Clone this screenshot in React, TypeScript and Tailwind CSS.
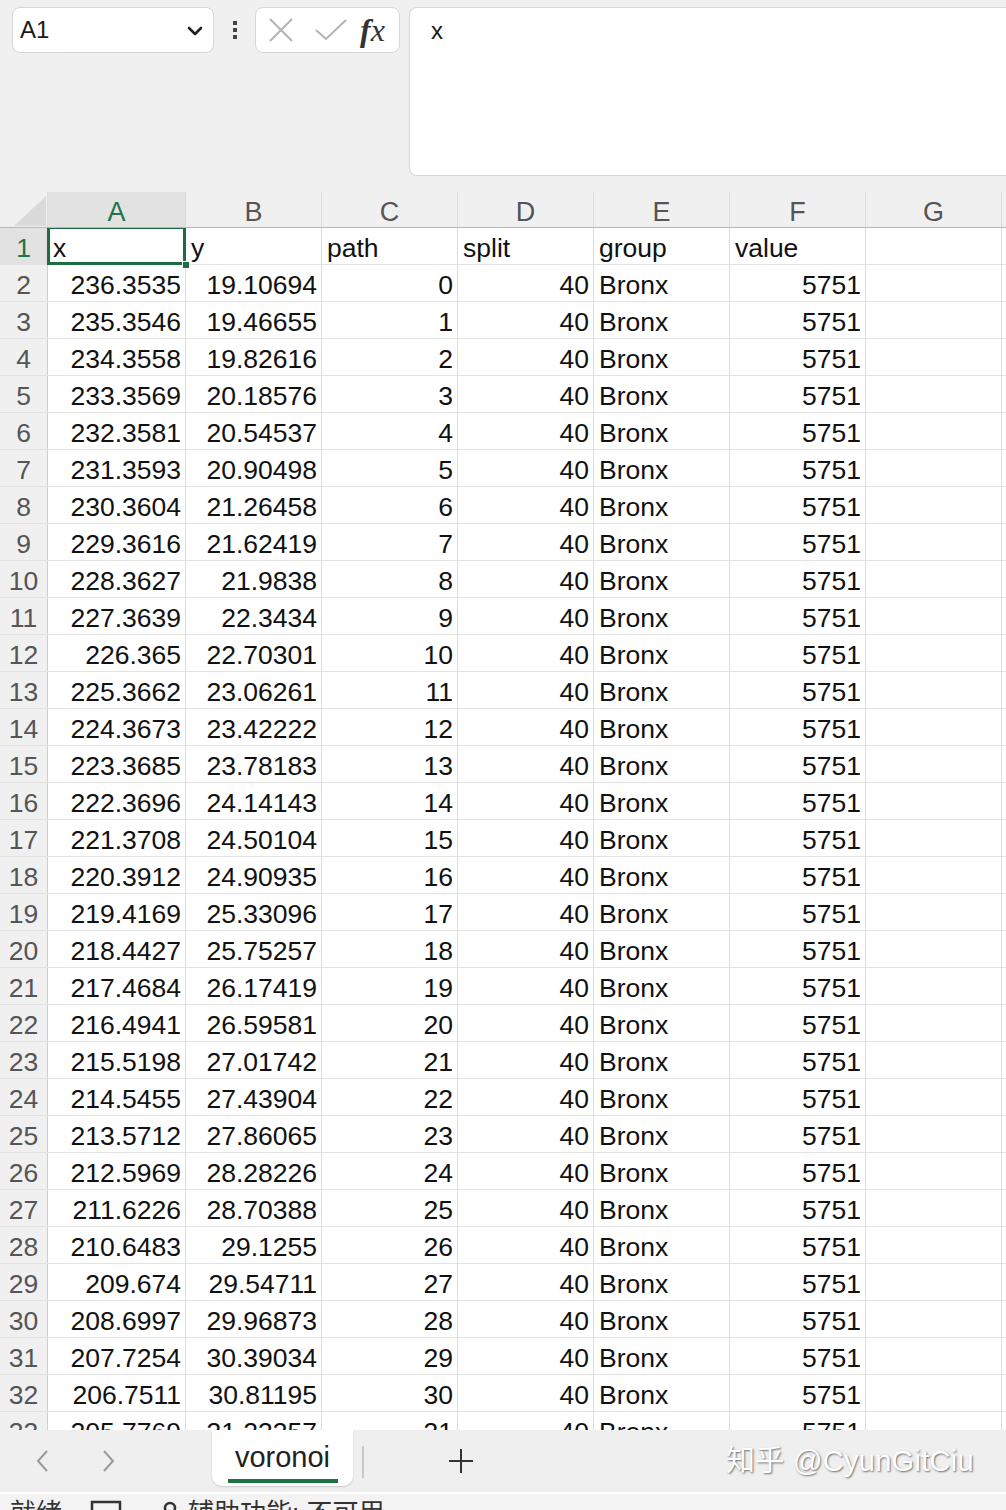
import React from "react";

const rows: [string, string, string][] = [
  ["236.3535", "19.10694", "0"],
  ["235.3546", "19.46655", "1"],
  ["234.3558", "19.82616", "2"],
  ["233.3569", "20.18576", "3"],
  ["232.3581", "20.54537", "4"],
  ["231.3593", "20.90498", "5"],
  ["230.3604", "21.26458", "6"],
  ["229.3616", "21.62419", "7"],
  ["228.3627", "21.9838", "8"],
  ["227.3639", "22.3434", "9"],
  ["226.365", "22.70301", "10"],
  ["225.3662", "23.06261", "11"],
  ["224.3673", "23.42222", "12"],
  ["223.3685", "23.78183", "13"],
  ["222.3696", "24.14143", "14"],
  ["221.3708", "24.50104", "15"],
  ["220.3912", "24.90935", "16"],
  ["219.4169", "25.33096", "17"],
  ["218.4427", "25.75257", "18"],
  ["217.4684", "26.17419", "19"],
  ["216.4941", "26.59581", "20"],
  ["215.5198", "27.01742", "21"],
  ["214.5455", "27.43904", "22"],
  ["213.5712", "27.86065", "23"],
  ["212.5969", "28.28226", "24"],
  ["211.6226", "28.70388", "25"],
  ["210.6483", "29.1255", "26"],
  ["209.674", "29.54711", "27"],
  ["208.6997", "29.96873", "28"],
  ["207.7254", "30.39034", "29"],
  ["206.7511", "30.81195", "30"],
  ["205.7769", "31.23357", "31"],
];

const colW = ["w-[138px]", "w-[136px]", "w-[136px]", "w-[136px]", "w-[136px]", "w-[136px]", "w-[136px]", "w-[136px]"];
const letters = ["A", "B", "C", "D", "E", "F", "G", ""];

function Cell({ w, children, right, className = "" }: { w: string; children?: React.ReactNode; right?: boolean; className?: string }) {
  return (
    <div
      className={`${w} shrink-0 h-full border-r border-[#dcdcdc] flex items-center pt-[6px] overflow-visible whitespace-nowrap ${right ? "justify-end pr-[4px]" : "justify-start pl-[5px]"} ${className}`}
    >
      {children}
    </div>
  );
}

export default function App() {
  return (
    <div className="w-[1006px] h-[1510px] overflow-hidden bg-[#f0f0f0] flex flex-col relative" style={{ fontFamily: '"Liberation Sans", "Noto Sans CJK SC", sans-serif' }}>
      {/* Formula bar */}
      <div className="h-[192px] shrink-0 flex items-start pt-[7px] pl-[12px] gap-0">
        <div className="w-[202px] h-[46px] bg-white border border-[#d6d6d6] rounded-[8px] flex items-center justify-between pl-[7px] pr-[8px]">
          <span className="text-[24px] text-[#1a1a1a]">A1</span>
          <svg width="20" height="20" viewBox="0 0 20 20" className="mt-[2px]">
            <path d="M4 7 L10 13 L16 7" fill="none" stroke="#222" strokeWidth="2.6" strokeLinecap="round" strokeLinejoin="round" />
          </svg>
        </div>
        <div className="w-[41px] h-[46px] flex flex-col items-center justify-center gap-[3px]">
          <div className="w-[4px] h-[4px] bg-[#444]" />
          <div className="w-[4px] h-[4px] bg-[#444]" />
          <div className="w-[4px] h-[4px] bg-[#444]" />
        </div>
        <div className="w-[145px] h-[46px] bg-white border border-[#d6d6d6] rounded-[8px] flex items-center pl-[12px]">
          <svg width="26" height="26" viewBox="0 0 26 26">
            <path d="M2 2 L24 24 M24 2 L2 24" stroke="#b4b4b4" strokeWidth="2" />
          </svg>
          <svg width="34" height="26" viewBox="0 0 34 26" className="ml-[20px]">
            <path d="M2 13 L12 22 L32 3" fill="none" stroke="#b4b4b4" strokeWidth="2" />
          </svg>
          <span className="ml-[12px] text-[32px] italic text-[#333] leading-none" style={{ fontFamily: '"Liberation Serif", serif' }}>
            <span className="font-bold">f</span>x
          </span>
        </div>
        <div className="ml-[9px] flex-1 h-[169px] bg-white border border-[#d6d6d6] border-r-0 rounded-l-[8px] pl-[21px] pt-[5px]">
          <span className="text-[24px] text-[#1a1a1a]">x</span>
        </div>
      </div>

      {/* Column headers */}
      <div className="h-[36px] shrink-0 flex border-b border-[#b8b8b8] bg-[#f0f0f0]">
        <div className="w-[48px] shrink-0 h-full relative border-r border-[#dcdcdc]">
          <svg width="48" height="36" viewBox="0 0 48 36" className="absolute inset-0">
            <path d="M46 4 L46 34 L14 34 Z" fill="#dadada" />
          </svg>
        </div>
        {letters.map((l, i) => (
          <div
            key={i}
            className={`${colW[i]} shrink-0 h-full border-r border-[#dcdcdc] flex items-end justify-center pb-[1px] text-[27px] leading-none ${i === 0 ? "bg-[#e2e2e2] text-[#217346]" : "text-[#555]"}`}
          >
            {l}
          </div>
        ))}
      </div>

      {/* Grid */}
      <div className="h-[1202px] shrink-0 overflow-hidden bg-white text-[26.5px] text-[#111] relative">
        <div className="h-[37px] flex border-b border-[#e2e2e2]">
          <div className="w-[48px] shrink-0 h-full bg-[#e2e2e2] border-r border-[#cfcfcf] flex items-center justify-center pt-[6px] text-[#217346]">1</div>
          <Cell w={colW[0]} className="relative">
            <span>x</span>
            <div className="absolute left-[-1px] top-[-2px] w-[139px] h-[39px] border-[3px] border-[#1e6c41]" />
            <div className="absolute right-[-5px] bottom-[-5px] w-[8px] h-[8px] bg-[#1e6c41] border border-white z-10" />
          </Cell>
          <Cell w={colW[1]}>y</Cell>
          <Cell w={colW[2]}>path</Cell>
          <Cell w={colW[3]}>split</Cell>
          <Cell w={colW[4]}>group</Cell>
          <Cell w={colW[5]}>value</Cell>
          <Cell w={colW[6]} />
          <Cell w={colW[7]} />
        </div>
        {rows.map((r, i) => (
          <div key={i} className="h-[37px] shrink-0 flex border-b border-[#e2e2e2]">
            <div className="w-[48px] shrink-0 h-full bg-[#f0f0f0] border-r border-[#cfcfcf] flex items-center justify-center pt-[6px] text-[#555]">{i + 2}</div>
            <Cell w={colW[0]} right>{r[0]}</Cell>
            <Cell w={colW[1]} right>{r[1]}</Cell>
            <Cell w={colW[2]} right>{r[2]}</Cell>
            <Cell w={colW[3]} right>40</Cell>
            <Cell w={colW[4]}>Bronx</Cell>
            <Cell w={colW[5]} right>5751</Cell>
            <Cell w={colW[6]} />
            <Cell w={colW[7]} />
          </div>
        ))}
      </div>

      {/* Sheet tabs */}
      <div className="h-[62px] shrink-0 bg-[#efefef] flex items-start relative">
        <div className="w-[212px] h-full flex items-center pl-[33px]">
          <svg width="20" height="26" viewBox="0 0 20 26">
            <path d="M14 3 L5 13 L14 23" fill="none" stroke="#9a9a9a" strokeWidth="2" />
          </svg>
          <svg width="20" height="26" viewBox="0 0 20 26" className="ml-[45px]">
            <path d="M6 3 L15 13 L6 23" fill="none" stroke="#9a9a9a" strokeWidth="2" />
          </svg>
        </div>
        <div className="w-[141px] h-[56px] bg-white rounded-b-[10px] shadow-[0_1px_2px_rgba(0,0,0,0.15)] flex flex-col items-center pt-[13px]">
          <span className="text-[29px] leading-none text-[#222]">voronoi</span>
          <div className="w-[110px] h-[4px] bg-[#1e7145] mt-[7px]" />
        </div>
        <div className="ml-[9px] mt-[16px] w-[2px] h-[32px] bg-[#c8c8c8]" />
        <div className="ml-[84px] h-full flex items-center">
          <svg width="26" height="26" viewBox="0 0 26 26">
            <path d="M13 1 L13 25 M1 13 L25 13" stroke="#333" strokeWidth="2" />
          </svg>
        </div>
        <div className="absolute left-[726px] top-[17px] text-[29px] text-white leading-none [text-shadow:1px_1px_2px_rgba(0,0,0,0.55)] tracking-[0.3px]">
          知乎 @CyunGitCiu
        </div>
      </div>

      {/* Status bar */}
      <div className="h-[2px] shrink-0 bg-white" />
      <div className="h-[16px] shrink-0 bg-[#f3f3f3] overflow-hidden flex items-start pt-[6px] pl-[10px] text-[26px] text-[#333] leading-none">
        <span>就绪</span>
        <svg width="32" height="30" viewBox="0 0 32 30" className="ml-[28px]">
          <rect x="2" y="2" width="28" height="24" fill="none" stroke="#333" strokeWidth="2.5" />
        </svg>
        <svg width="28" height="30" viewBox="0 0 28 30" className="ml-[34px]">
          <circle cx="14" cy="8" r="5" fill="none" stroke="#333" strokeWidth="2.5" />
        </svg>
        <span className="ml-[4px]">辅助功能: 不可用</span>
      </div>
    </div>
  );
}
